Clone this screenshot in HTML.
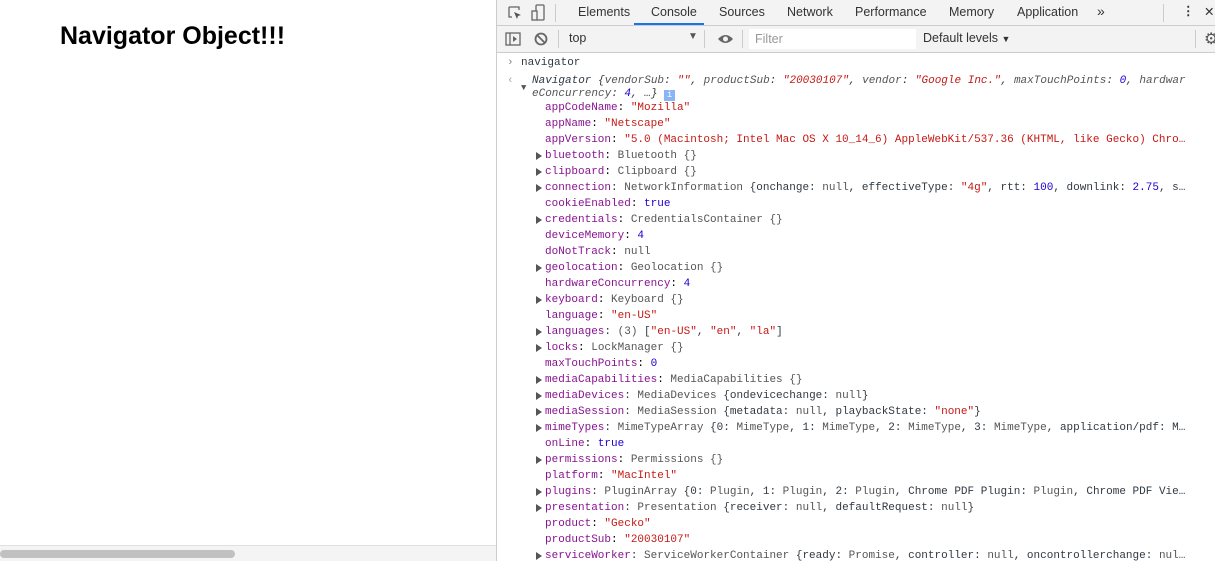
<!DOCTYPE html>
<html><head><style>
*{margin:0;padding:0;box-sizing:border-box}
body{width:1215px;height:561px;overflow:hidden;background:#fff;font-family:"Liberation Sans",sans-serif;position:relative}
h1{position:absolute;left:60px;top:22px;font-size:25px;font-weight:bold;color:#000}
.hs{position:absolute;left:0;top:545px;width:496px;height:16px;background:#f4f4f4;border-top:1px solid #e0e0e0}
.hs div{position:absolute;left:0;top:4px;width:235px;height:8px;border-radius:4px;background:#c1c1c1}
.dt{position:absolute;left:496px;top:0;width:719px;height:561px;border-left:1px solid #ccc;background:#fff}
.tb1{position:absolute;left:0;top:0;width:719px;height:26px;background:#f3f3f3;border-bottom:1px solid #ccc;font-size:12.5px;color:#333}
.tb1 span{position:absolute;top:5px}
.tb2{position:absolute;left:0;top:26px;width:719px;height:27px;background:#f3f3f3;border-bottom:1px solid #ccc;font-size:12.5px;color:#333}
.mono{font-family:"Liberation Mono",monospace;font-size:11px;white-space:pre;position:absolute;left:0;width:719px;overflow:hidden}
.l{position:absolute;height:16px;line-height:16px;white-space:pre}
.k{color:#881391}.s{color:#c41a16}.n{color:#1c00cf}.g{color:#555}.o{color:#303942}
.tri{position:absolute;left:-9px;top:4px;width:0;height:0;border-top:4px solid transparent;border-bottom:4px solid transparent;border-left:6px solid #555}
</style></head><body>
<h1>Navigator Object!!!</h1>
<div class="hs"><div></div></div>
<div class="dt">
<div class="tb1">
<svg style="position:absolute;left:10px;top:5px" width="16" height="16"><path d="M2 2h10v3M2 2v10h3" fill="none" stroke="#666" stroke-width="1.3"/><path d="M7 7l7 3-3 1-1 3z" fill="#555"/></svg>
<svg style="position:absolute;left:34px;top:4px" width="14" height="18"><rect x="5" y="1" width="8" height="15" rx="1" fill="none" stroke="#666" stroke-width="1.3"/><rect x="1" y="7" width="5" height="9" fill="#f3f3f3" stroke="#666" stroke-width="1.3"/></svg>
<div style="position:absolute;left:58px;top:4px;width:1px;height:18px;background:#ccc"></div>
<span style="left:81px">Elements</span>
<span style="left:154px;color:#333">Console</span>
<div style="position:absolute;left:137px;top:23px;width:70px;height:2px;background:#1a73e8"></div>
<span style="left:222px">Sources</span>
<span style="left:290px">Network</span>
<span style="left:358px">Performance</span>
<span style="left:452px">Memory</span>
<span style="left:520px">Application</span>
<span style="left:600px;font-size:14px;top:3px">»</span>
<div style="position:absolute;left:666px;top:4px;width:1px;height:18px;background:#ccc"></div>
<span style="left:685px;font-weight:bold;top:3px">⋮</span>
<span style="left:707px;top:4px">✕</span>
</div>
<div class="tb2">
<svg style="position:absolute;left:8px;top:6px" width="16" height="14"><rect x="1" y="1" width="14" height="12" fill="none" stroke="#666" stroke-width="1.3"/><path d="M5 1v12" stroke="#666" stroke-width="1.3"/><path d="M8 4l4 3-4 3z" fill="#666"/></svg>
<svg style="position:absolute;left:37px;top:6px" width="14" height="14"><circle cx="7" cy="7" r="5.5" fill="none" stroke="#666" stroke-width="1.8"/><path d="M3 3l8 8" stroke="#666" stroke-width="1.8"/></svg>
<div style="position:absolute;left:61px;top:4px;width:1px;height:18px;background:#ccc"></div>
<span style="position:absolute;left:72px;top:5px">top</span>
<span style="position:absolute;left:191px;top:5px;font-size:10px;color:#555">▼</span>
<div style="position:absolute;left:207px;top:4px;width:1px;height:18px;background:#ccc"></div>
<svg style="position:absolute;left:220px;top:7px" width="17" height="12"><path d="M1 6Q8.5-2 16 6Q8.5 14 1 6z" fill="#666"/><circle cx="8.5" cy="6" r="2.5" fill="#f3f3f3"/></svg>
<div style="position:absolute;left:245px;top:4px;width:1px;height:18px;background:#ccc"></div>
<div style="position:absolute;left:252px;top:3px;width:167px;height:20px;background:#fff"></div>
<span style="position:absolute;left:258px;top:6px;color:#999">Filter</span>
<span style="position:absolute;left:426px;top:5px">Default levels <span style="font-size:9px">▼</span></span>
<div style="position:absolute;left:698px;top:4px;width:1px;height:18px;background:#ccc"></div>
<span style="position:absolute;left:707px;top:3px;font-size:16px;color:#555">⚙</span>
</div>
<div class="mono" style="top:54px;height:507px">
<div class="l o" style="left:10px;top:1px;color:#888">›</div>
<div class="l o" style="left:24px;top:1px">navigator</div>
<div class="l" style="left:10px;top:19px;color:#aaa">‹</div>
<div class="l" style="left:24px;top:26px;color:#555;font-size:9px">▼</div>
<div class="l o" style="left:35px;top:19px;font-style:italic">Navigator {<span class="g">vendorSub</span>: <span class="s">""</span>, <span class="g">productSub</span>: <span class="s">"20030107"</span>, <span class="g">vendor</span>: <span class="s">"Google Inc."</span>, <span class="g">maxTouchPoints</span>: <span class="n">0</span>, <span class="g">hardwar</span></div>
<div class="l o" style="left:35px;top:32px;font-style:italic"><span class="g">eConcurrency</span>: <span class="n">4</span>, …} <span style="display:inline-block;width:11px;height:11px;background:#8ab4f8;color:#fff;font-size:9px;line-height:11px;text-align:center;font-style:normal;vertical-align:-1px">i</span></div>
<div style="position:absolute;left:48px;top:46px">
<div class="l" style="top:0"><span class="k">appCodeName</span>: <span class="s">"Mozilla"</span></div>
<div class="l" style="top:16px"><span class="k">appName</span>: <span class="s">"Netscape"</span></div>
<div class="l" style="top:32px"><span class="k">appVersion</span>: <span class="s">"5.0 (Macintosh; Intel Mac OS X 10_14_6) AppleWebKit/537.36 (KHTML, like Gecko) Chro…</span></div>
<div class="l" style="top:48px"><i class="tri"></i><span class="k">bluetooth</span>: <span class="g">Bluetooth {}</span></div>
<div class="l" style="top:64px"><i class="tri"></i><span class="k">clipboard</span>: <span class="g">Clipboard {}</span></div>
<div class="l o" style="top:80px"><i class="tri"></i><span class="k">connection</span>: <span class="g">NetworkInformation </span>{onchange: <span class="g">null</span>, effectiveType: <span class="s">"4g"</span>, rtt: <span class="n">100</span>, downlink: <span class="n">2.75</span>, s…</div>
<div class="l" style="top:96px"><span class="k">cookieEnabled</span>: <span class="n">true</span></div>
<div class="l" style="top:112px"><i class="tri"></i><span class="k">credentials</span>: <span class="g">CredentialsContainer {}</span></div>
<div class="l" style="top:128px"><span class="k">deviceMemory</span>: <span class="n">4</span></div>
<div class="l" style="top:144px"><span class="k">doNotTrack</span>: <span class="g">null</span></div>
<div class="l" style="top:160px"><i class="tri"></i><span class="k">geolocation</span>: <span class="g">Geolocation {}</span></div>
<div class="l" style="top:176px"><span class="k">hardwareConcurrency</span>: <span class="n">4</span></div>
<div class="l" style="top:192px"><i class="tri"></i><span class="k">keyboard</span>: <span class="g">Keyboard {}</span></div>
<div class="l" style="top:208px"><span class="k">language</span>: <span class="s">"en-US"</span></div>
<div class="l o" style="top:224px"><i class="tri"></i><span class="k">languages</span>: <span class="g">(3) </span>[<span class="s">"en-US"</span>, <span class="s">"en"</span>, <span class="s">"la"</span>]</div>
<div class="l" style="top:240px"><i class="tri"></i><span class="k">locks</span>: <span class="g">LockManager {}</span></div>
<div class="l" style="top:256px"><span class="k">maxTouchPoints</span>: <span class="n">0</span></div>
<div class="l" style="top:272px"><i class="tri"></i><span class="k">mediaCapabilities</span>: <span class="g">MediaCapabilities {}</span></div>
<div class="l o" style="top:288px"><i class="tri"></i><span class="k">mediaDevices</span>: <span class="g">MediaDevices </span>{ondevicechange: <span class="g">null</span>}</div>
<div class="l o" style="top:304px"><i class="tri"></i><span class="k">mediaSession</span>: <span class="g">MediaSession </span>{metadata: <span class="g">null</span>, playbackState: <span class="s">"none"</span>}</div>
<div class="l o" style="top:320px"><i class="tri"></i><span class="k">mimeTypes</span>: <span class="g">MimeTypeArray </span>{0: <span class="g">MimeType</span>, 1: <span class="g">MimeType</span>, 2: <span class="g">MimeType</span>, 3: <span class="g">MimeType</span>, application/pdf: M…</div>
<div class="l" style="top:336px"><span class="k">onLine</span>: <span class="n">true</span></div>
<div class="l" style="top:352px"><i class="tri"></i><span class="k">permissions</span>: <span class="g">Permissions {}</span></div>
<div class="l" style="top:368px"><span class="k">platform</span>: <span class="s">"MacIntel"</span></div>
<div class="l o" style="top:384px"><i class="tri"></i><span class="k">plugins</span>: <span class="g">PluginArray </span>{0: <span class="g">Plugin</span>, 1: <span class="g">Plugin</span>, 2: <span class="g">Plugin</span>, Chrome PDF Plugin: <span class="g">Plugin</span>, Chrome PDF Vie…</div>
<div class="l o" style="top:400px"><i class="tri"></i><span class="k">presentation</span>: <span class="g">Presentation </span>{receiver: <span class="g">null</span>, defaultRequest: <span class="g">null</span>}</div>
<div class="l" style="top:416px"><span class="k">product</span>: <span class="s">"Gecko"</span></div>
<div class="l" style="top:432px"><span class="k">productSub</span>: <span class="s">"20030107"</span></div>
<div class="l o" style="top:448px"><i class="tri"></i><span class="k">serviceWorker</span>: <span class="g">ServiceWorkerContainer </span>{ready: <span class="g">Promise</span>, controller: <span class="g">null</span>, oncontrollerchange: <span class="g">nul…</span></div>
</div>
</div>
</div>
</body></html>
